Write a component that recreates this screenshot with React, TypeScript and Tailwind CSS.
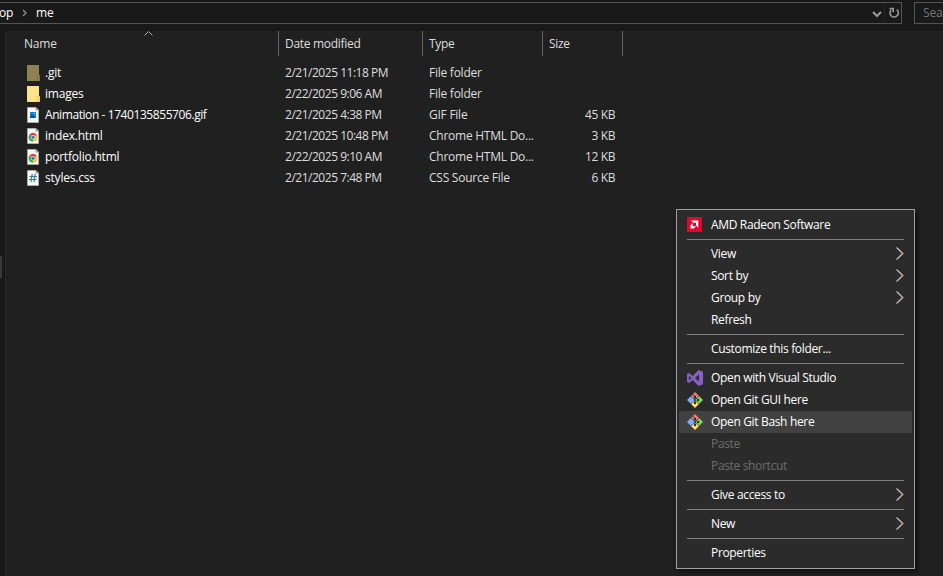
import type { ReactNode } from "react";

type FileRow = {
  name: string;
  date: string;
  type: string;
  size?: string;
  icon: ReactNode;
};

function FolderIcon({ dim }: { dim?: boolean }) {
  return (
    <svg width="16" height="16" viewBox="0 0 16 16" className={dim ? "opacity-50" : ""}>
      <path d="M1 0h12v16H1z" fill="#ffdf80" />
      <path d="M2 1h10v14H2z" fill="#ffe490" />
      <path d="M11 10h3v6h-3z" fill="#f3ca59" />
      <path d="M12 11h1v4h-1z" fill="#ffe08a" />
    </svg>
  );
}

function PageIcon({ children }: { children: ReactNode }) {
  return (
    <svg width="16" height="16" viewBox="0 0 16 16">
      <path d="M1.5.5h8.5L12.5 3v12.5h-11z" fill="#f7f7f7" stroke="#c9c9c9" strokeWidth=".5" />
      <path d="M9.5 0v3.5H13z" fill="#a5a5a5" />
      {children}
    </svg>
  );
}

function ChromePage() {
  return (
    <PageIcon>
      <path d="M7 9.2 3.2 7a4.4 4.4 0 0 1 7.6 0z" fill="#e33b2e" />
      <path d="M7 9.2 3.2 7A4.4 4.4 0 0 0 7 13.6z" fill="#2da94f" />
      <path d="M7 9.2 10.8 7A4.4 4.4 0 0 1 7 13.6z" fill="#fcc31e" />
      <circle cx="7" cy="9.2" r="2.2" fill="#fff" />
      <circle cx="7" cy="9.2" r="1.7" fill="#3478e5" />
    </PageIcon>
  );
}

function GifPage() {
  return (
    <PageIcon>
      <path d="M4 5h6v6H4z" fill="#1683d9" />
      <path d="M4 11V9l2-2 4 4z" fill="#0b53a4" />
      <path d="M8 6h1v1H8z" fill="#bfe5ff" />
    </PageIcon>
  );
}

function CssPage() {
  return (
    <PageIcon>
      <path d="M6.2 4 5 12M9.2 4 8 12M3.5 6.5h7.5M3 9.5h7.5" stroke="#397b9d" strokeWidth="1.2" fill="none" />
    </PageIcon>
  );
}

function AmdIcon() {
  return (
    <svg width="15" height="15" viewBox="0 0 15 15" className="-mt-px">
      <path d="M0 0h15v15H0z" fill="#e1062c" />
      <path d="M4 3.5h7.3v7.3L9 8.5V5.8H6.3z" fill="#fff" />
      <path d="M3.5 8.2 5.7 6v3.3H9l-2.2 2.2H3.5z" fill="#fff" />
    </svg>
  );
}

function VisualStudioIcon() {
  return (
    <svg width="16" height="16" viewBox="0 0 16 16">
      <path
        fillRule="evenodd"
        d="M11.5 0 16 1.8v12.4L11.5 16 5.7 10 2 13 0 12V4l2-1 3.7 3zM12 4.6 8 8l4 3.4zM1.9 5.7v4.6L4.2 8z"
        fill="#865fc5"
      />
    </svg>
  );
}

function GitIcon() {
  return (
    <svg width="16" height="16" viewBox="0 0 16 16">
      <path d="M8 0l4 4-4 4-4-4z" fill="#f47c7c" />
      <path d="M4 4l4 4-4 4-4-4z" fill="#78adff" />
      <path d="M12 4l4 4-4 4-4-4z" fill="#86d65c" />
      <path d="M8 8l4 4-4 4-4-4z" fill="#ffe074" />
      <path d="M4 4l8 8M12 4l-8 8" stroke="#292929" strokeWidth=".5" />
      <path d="M5.5 2 8 4.5v6.5M8 5l3 3" stroke="#292929" fill="none" />
      <circle cx="8" cy="5" r="1.2" fill="#292929" />
      <circle cx="8" cy="11" r="1.2" fill="#292929" />
      <circle cx="11" cy="8" r="1.2" fill="#292929" />
    </svg>
  );
}

function SubmenuArrow() {
  return (
    <svg width="9" height="13" viewBox="0 0 9 13" fill="none" className="-mt-px">
      <path d="M1 .5l6 6-6 6" stroke="#4a9ae6" />
      <path d="M2.2 .5l6 6-6 6" stroke="#f0964a" />
      <path d="M1.6 .5l6 6-6 6" stroke="#fff" strokeWidth=".6" />
    </svg>
  );
}

const files: FileRow[] = [
  { name: ".git", date: "2/21/2025 11:18 PM", type: "File folder", icon: <FolderIcon dim /> },
  { name: "images", date: "2/22/2025 9:06 AM", type: "File folder", icon: <FolderIcon /> },
  { name: "Animation - 1740135855706.gif", date: "2/21/2025 4:38 PM", type: "GIF File", size: "45 KB", icon: <GifPage /> },
  { name: "index.html", date: "2/21/2025 10:48 PM", type: "Chrome HTML Do...", size: "3 KB", icon: <ChromePage /> },
  { name: "portfolio.html", date: "2/22/2025 9:10 AM", type: "Chrome HTML Do...", size: "12 KB", icon: <ChromePage /> },
  { name: "styles.css", date: "2/21/2025 7:48 PM", type: "CSS Source File", size: "6 KB", icon: <CssPage /> },
];

function MenuItem({ label, icon, arrow, active, disabled }: {
  label: string;
  icon?: ReactNode;
  arrow?: boolean;
  active?: boolean;
  disabled?: boolean;
}) {
  return (
    <div className={`mx-0.5 flex h-[22px] items-center px-2 ${active ? "bg-[#414141]" : ""} ${disabled ? "text-[#6d6d6d]" : "text-white"}`}>
      <span className="flex w-6 shrink-0">{icon}</span>
      <span className="flex-1">{label}</span>
      {arrow && <SubmenuArrow />}
    </div>
  );
}

function Divider() {
  return (
    <div className="mx-2.5 flex h-[7px] items-center">
      <div className="h-px w-full bg-[#808080]" />
    </div>
  );
}

function ContextMenu() {
  return (
    <div className="absolute top-[209px] left-[676px] h-[360px] w-[239px] border border-[#a0a0a0] bg-[#2b2b2b] py-1 tracking-[-0.34px] shadow-[3px_3px_4px_rgba(0,0,0,0.5)]">
      <MenuItem label="AMD Radeon Software" icon={<AmdIcon />} />
      <Divider />
      <MenuItem label="View" arrow />
      <MenuItem label="Sort by" arrow />
      <MenuItem label="Group by" arrow />
      <MenuItem label="Refresh" />
      <Divider />
      <MenuItem label="Customize this folder..." />
      <Divider />
      <MenuItem label="Open with Visual Studio" icon={<VisualStudioIcon />} />
      <MenuItem label="Open Git GUI here" icon={<GitIcon />} />
      <MenuItem label="Open Git Bash here" icon={<GitIcon />} active />
      <MenuItem label="Paste" disabled />
      <MenuItem label="Paste shortcut" disabled />
      <Divider />
      <MenuItem label="Give access to" arrow />
      <Divider />
      <MenuItem label="New" arrow />
      <Divider />
      <MenuItem label="Properties" />
    </div>
  );
}

export default function App() {
  return (
    <div className="relative flex h-[576px] w-[943px] flex-col overflow-hidden bg-[#202020] font-['Open_Sans','Noto_Sans',sans-serif] text-[12px] leading-4 tracking-[-0.2px] whitespace-nowrap text-white">
      <div className="flex h-[31px] shrink-0 bg-[#191919] pt-0.5">
        <div className="flex h-[22px] w-[902px] shrink-0 items-center border border-l-0 border-[#535353]">
          <span className="w-[21px] -indent-px">op</span>
          <svg width="7" height="8" viewBox="0 0 7 8" fill="none" className="mr-2">
            <path d="M2 1l3 3-3 3" stroke="#8d8d8d" strokeWidth="1.4" />
          </svg>
          <span>me</span>
          <svg width="10" height="7" viewBox="0 0 10 7" fill="none" className="mt-0.5 mr-[2px] ml-auto">
            <path d="M1 1l4 4 4-4" stroke="#9c9c9c" strokeWidth="2" />
          </svg>
          <div className="flex h-full w-[17px] items-center justify-center border-l border-[#242424]">
            <svg width="12" height="12" viewBox="0 0 12 12" fill="none" className="ml-px">
              <path d="M8.8 2.6a4.2 4.2 0 1 1-5.7.4M1.5 1.5h3.7v3.7" stroke="#9c9c9c" strokeWidth="1.6" />
            </svg>
          </div>
        </div>
        <div className="ml-3 flex h-[22px] flex-1 items-center overflow-hidden border border-r-0 border-[#535353] pl-2 text-[#777]">
          Sear
        </div>
      </div>

      <div className="flex flex-1">
        <div className="w-[5px] border-r border-[#141414] bg-[#191919] pt-[225px]">
          <div className="h-[22px] w-0.5 bg-[#393939]" />
        </div>
        <div className="flex-1 border-l border-[#2b2b2b]">
          <div className="flex h-[25px] items-center tracking-[-0.3px] text-[#dedede]">
            <div className="flex h-full w-[273px] items-center border-r border-[#636363] pl-[18px]">
              <span className="w-[120px] tracking-[-0.2px]">Name</span>
              <svg width="9" height="5" viewBox="0 0 9 5" fill="none" className="-mt-5">
                <path d="M.5 4.5l4-4 4 4" stroke="#aaa" />
              </svg>
            </div>
            <div className="flex h-full w-36 items-center border-r border-[#636363] pl-1.5">Date modified</div>
            <div className="flex h-full w-[120px] items-center border-r border-[#636363] pl-1.5">Type</div>
            <div className="flex h-full w-20 items-center border-r border-[#636363] pl-1.5">Size</div>
          </div>
          <div className="pt-1.5">
            {files.map((f) => (
              <div key={f.name} className="flex h-[21px] items-center text-[#dedede]">
                <div className="flex w-[279px] items-center pl-5 text-white">
                  {f.icon}
                  <span className={f.name.length > 20 ? "ml-[3px] tracking-[-0.42px]" : "ml-[3px] tracking-[-0.2px]"}>{f.name}</span>
                </div>
                <div className="w-36 tracking-[-0.48px]">{f.date}</div>
                <div className="w-[120px] tracking-[-0.25px]">{f.type}</div>
                <div className="w-[66px] text-right tracking-[-0.4px]">{f.size}</div>
              </div>
            ))}
          </div>
        </div>
      </div>
      <ContextMenu />
    </div>
  );
}
